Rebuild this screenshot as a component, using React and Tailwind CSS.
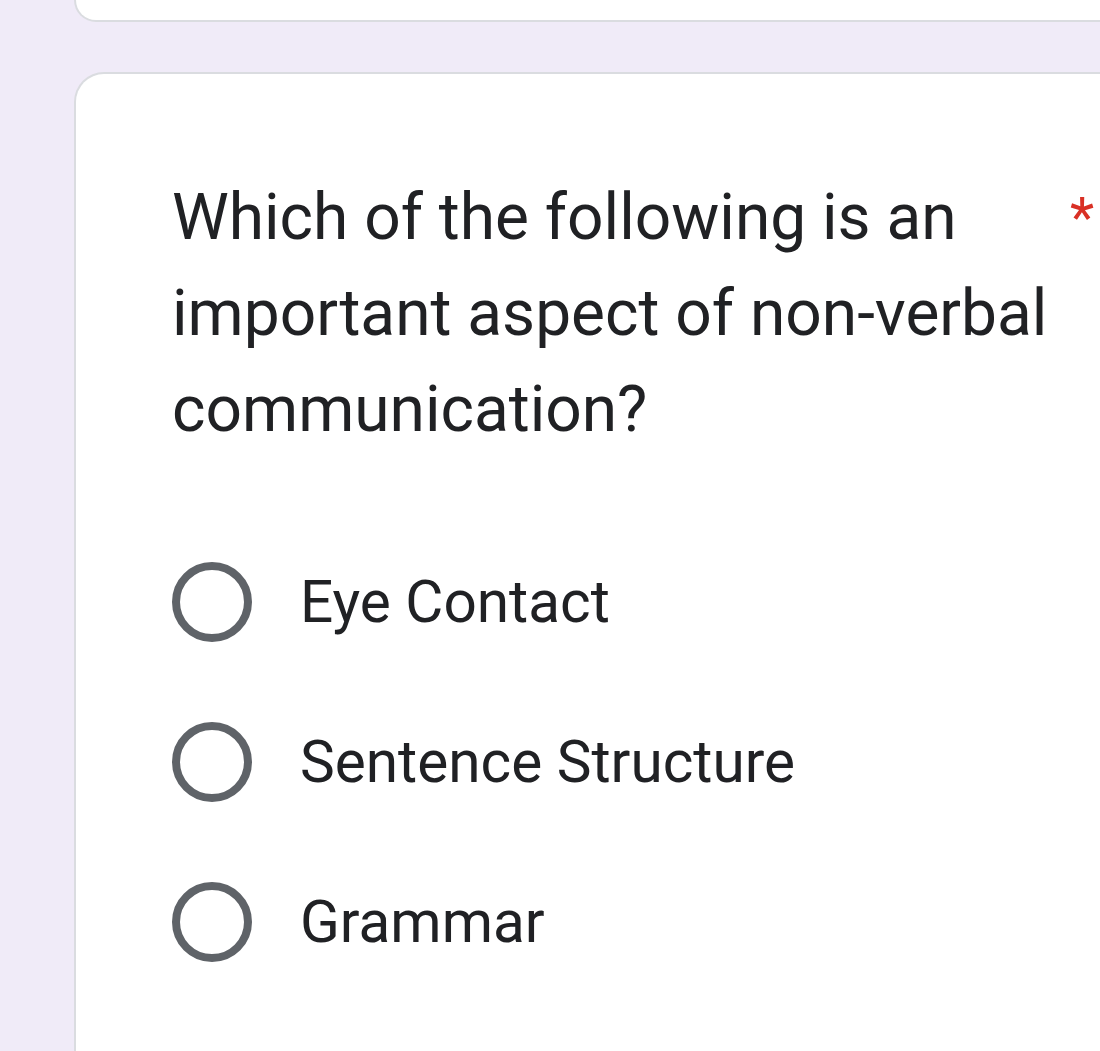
import React from 'react';

const OPTIONS = ['Eye Contact', 'Sentence Structure', 'Grammar'];

const App = () => {
  return (
    <div className="h-[1051px] w-[1100px] overflow-hidden bg-[#f0ebf8] pl-[74px] font-['Roboto',sans-serif] text-[#202124]">
      {/* Previous card (only its bottom edge shows) */}
      <div className="h-[22px] w-[1100px] rounded-b-[30px] border-2 border-t-0 border-[#dadce0] bg-white" />

      {/* Question card */}
      <div className="mt-[50px] h-[1100px] w-[1100px] rounded-t-[30px] border-2 border-b-0 border-[#dadce0] bg-white p-[96px]">
        <div className="flex">
          <div className="w-[880px] shrink-0 text-[64px] leading-[96px]">
            Which of the following is an important aspect of non-verbal communication?
          </div>
          <span className="pl-[18px] text-[56px] leading-[96px] text-[#d93025]">*</span>
        </div>

        <div className="mt-[64px]">
          {OPTIONS.map(opt => (
            <div key={opt} className="flex h-[160px] items-center">
              <div className="h-[80px] w-[80px] shrink-0 rounded-full border-[8px] border-[#5f6368]" />
              <span className="ml-[48px] text-[58.5px] leading-[80px]">{opt}</span>
            </div>
          ))}
        </div>
      </div>
    </div>
  );
};

export default App;
